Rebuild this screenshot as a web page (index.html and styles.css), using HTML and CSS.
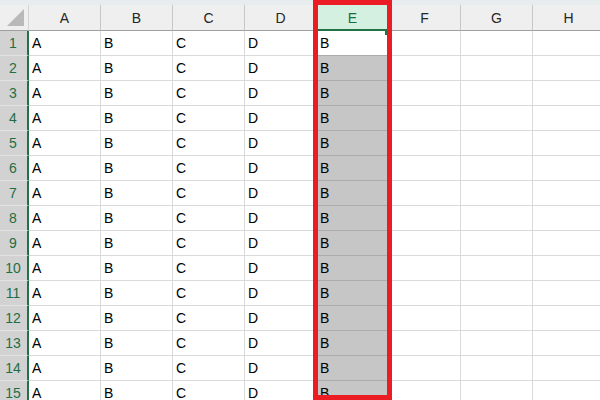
FILE: index.html
```html
<!DOCTYPE html>
<html>
<head>
<meta charset="utf-8">
<link rel="stylesheet" href="styles.css">
</head>
<body>
<div class="topbar"></div>
<div class="sheet">
  <div class="corner"><svg width="18" height="18" viewBox="0 0 18 18"><polygon points="17,0 17,17 0,17" fill="#b9b9b9"/></svg></div>
  <div class="ch">A</div><div class="ch">B</div><div class="ch">C</div><div class="ch">D</div><div class="ch sel">E</div><div class="ch">F</div><div class="ch">G</div><div class="ch">H</div>

  <div class="rh">1</div><div class="c">A</div><div class="c">B</div><div class="c">C</div><div class="c">D</div><div class="c active">B</div><div class="c"></div><div class="c"></div><div class="c"></div>
  <div class="rh">2</div><div class="c">A</div><div class="c">B</div><div class="c">C</div><div class="c">D</div><div class="c sel">B</div><div class="c"></div><div class="c"></div><div class="c"></div>
  <div class="rh">3</div><div class="c">A</div><div class="c">B</div><div class="c">C</div><div class="c">D</div><div class="c sel">B</div><div class="c"></div><div class="c"></div><div class="c"></div>
  <div class="rh">4</div><div class="c">A</div><div class="c">B</div><div class="c">C</div><div class="c">D</div><div class="c sel">B</div><div class="c"></div><div class="c"></div><div class="c"></div>
  <div class="rh">5</div><div class="c">A</div><div class="c">B</div><div class="c">C</div><div class="c">D</div><div class="c sel">B</div><div class="c"></div><div class="c"></div><div class="c"></div>
  <div class="rh">6</div><div class="c">A</div><div class="c">B</div><div class="c">C</div><div class="c">D</div><div class="c sel">B</div><div class="c"></div><div class="c"></div><div class="c"></div>
  <div class="rh">7</div><div class="c">A</div><div class="c">B</div><div class="c">C</div><div class="c">D</div><div class="c sel">B</div><div class="c"></div><div class="c"></div><div class="c"></div>
  <div class="rh">8</div><div class="c">A</div><div class="c">B</div><div class="c">C</div><div class="c">D</div><div class="c sel">B</div><div class="c"></div><div class="c"></div><div class="c"></div>
  <div class="rh">9</div><div class="c">A</div><div class="c">B</div><div class="c">C</div><div class="c">D</div><div class="c sel">B</div><div class="c"></div><div class="c"></div><div class="c"></div>
  <div class="rh">10</div><div class="c">A</div><div class="c">B</div><div class="c">C</div><div class="c">D</div><div class="c sel">B</div><div class="c"></div><div class="c"></div><div class="c"></div>
  <div class="rh">11</div><div class="c">A</div><div class="c">B</div><div class="c">C</div><div class="c">D</div><div class="c sel">B</div><div class="c"></div><div class="c"></div><div class="c"></div>
  <div class="rh">12</div><div class="c">A</div><div class="c">B</div><div class="c">C</div><div class="c">D</div><div class="c sel">B</div><div class="c"></div><div class="c"></div><div class="c"></div>
  <div class="rh">13</div><div class="c">A</div><div class="c">B</div><div class="c">C</div><div class="c">D</div><div class="c sel">B</div><div class="c"></div><div class="c"></div><div class="c"></div>
  <div class="rh">14</div><div class="c">A</div><div class="c">B</div><div class="c">C</div><div class="c">D</div><div class="c sel">B</div><div class="c"></div><div class="c"></div><div class="c"></div>
  <div class="rh">15</div><div class="c">A</div><div class="c">B</div><div class="c">C</div><div class="c">D</div><div class="c sel">B</div><div class="c"></div><div class="c"></div><div class="c"></div>
</div>
<div class="handle"></div>
<div class="mark"></div>
</body>
</html>
```

FILE: styles.css
```css
* { box-sizing: border-box; }
html, body {
  margin: 0;
  width: 600px;
  height: 400px;
  overflow: hidden;
  background: #fff;
}
body {
  position: relative;
  font-family: "Liberation Sans", "Noto Sans CJK JP", sans-serif;
  font-size: 14px;
  color: #000;
}
.topbar {
  height: 5px;
  background: #e7edef;
}
.sheet {
  display: grid;
  grid-template-columns: 29px repeat(8, 72px);
  grid-template-rows: 26px;
  grid-auto-rows: 25px;
  width: 605px;
}
.corner {
  background: #efefef;
  border-right: 1px solid #d4d4d4;
  border-bottom: 1px solid #9f9f9f;
  display: flex;
  align-items: flex-end;
  justify-content: flex-end;
  padding: 0 3px 3px 0;
}
.corner svg { display: block; }
.ch {
  background: #efefef;
  border-right: 1px solid #c6c6c6;
  border-bottom: 1px solid #9f9f9f;
  display: flex;
  align-items: center;
  justify-content: center;
  color: #262626;
  padding-top: 1px;
}
.ch.sel {
  background: #d3f0e0;
  color: #1e6b40;
  border-bottom: 2px solid #217346;
}
.rh {
  background: #d2d2d2;
  border-right: 2px solid #217346;
  border-bottom: 1px solid #e3e3e3;
  display: flex;
  align-items: center;
  justify-content: center;
  color: #1f6d44;
  padding-right: 1px;
}
.c {
  border-right: 1px solid #dadada;
  border-bottom: 1px solid #dadada;
  display: flex;
  align-items: center;
  padding-left: 3px;
  white-space: nowrap;
}
.c.sel {
  background: #c6c6c6;
  border-bottom-color: #acacac;
  border-right-color: #ffffff;
}
.c.active {
  border-bottom-color: #acacac;
  border-right-color: #ffffff;
}
.handle {
  position: absolute;
  left: 385px;
  top: 30px;
  width: 4px;
  height: 5px;
  background: #217346;
}
.mark {
  position: absolute;
  left: 313px;
  top: 0;
  width: 79px;
  height: 400px;
  border: 5px solid #ec1c24;
}
```
